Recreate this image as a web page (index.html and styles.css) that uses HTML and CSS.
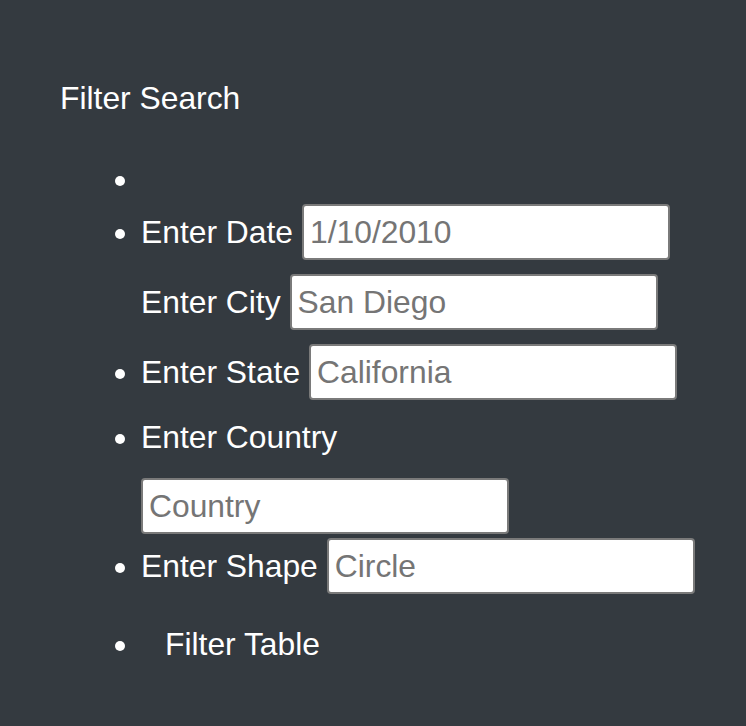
FILE: index.html
```html
<!DOCTYPE html>
<html lang="en">
<head>
<meta charset="utf-8">
<title>Filter Search</title>
<link rel="stylesheet" href="styles.css">
</head>
<body>
<main class="panel">
  <div class="title">Filter Search</div>
  <ul class="filters">
    <li class="empty"></li>
    <li>
      <div class="row"><label for="date">Enter Date</label><input id="date" type="text" placeholder="1/10/2010"></div>
    </li>
    <li class="nobullet">
      <div class="row"><label for="city">Enter City</label><input id="city" type="text" placeholder="San Diego"></div>
    </li>
    <li>
      <div class="row"><label for="state">Enter State</label><input id="state" type="text" placeholder="California"></div>
    </li>
    <li class="stacked">
      <div class="row col"><label for="country">Enter Country</label><input id="country" type="text" placeholder="Country"></div>
    </li>
    <li class="tight">
      <div class="row"><label for="shape">Enter Shape</label><input id="shape" type="text" placeholder="Circle"></div>
    </li>
    <li class="btnrow">
      <button type="button" class="filter-btn">Filter Table</button>
    </li>
  </ul>
</main>
</body>
</html>
```
FILE: styles.css
```css
html, body {
  margin: 0;
  background: #343a40;
}
body {
  color: #ffffff;
  font-family: "Liberation Sans", Arial, sans-serif;
  font-size: 31.8px;
  min-height: 726px;
}
.panel {
  padding: 81px 0 0 60px;
}
.title {
  line-height: 34px;
}
.filters {
  margin: 47px 0 0 0;
  padding: 0 0 0 81px;
  line-height: 34px;
}
.filters li {
  margin-bottom: 14px;
}
.filters li.empty {
  height: 34px;
  margin-bottom: 8px;
}
.filters li.nobullet {
  list-style: none;
}
.filters li.stacked {
  margin-top: 20px;
  margin-bottom: 4px;
}
.row {
  display: flex;
  align-items: center;
  gap: 9px;
}
.row.col {
  flex-direction: column;
  align-items: flex-start;
  gap: 24px;
}
.row label {
  white-space: nowrap;
}
.row input {
  box-sizing: border-box;
  width: 368px;
  height: 56px;
  padding: 0 6px;
  border: 2px solid #7a7a7a;
  border-radius: 4px;
  background: #ffffff;
  font: inherit;
  color: #222;
}
.row input::placeholder {
  color: #757575;
  opacity: 1;
}
.filters li.btnrow {
  margin-top: 22px;
}
.filter-btn {
  background: transparent;
  border: none;
  color: #ffffff;
  font: inherit;
  line-height: 34px;
  padding: 11px 24px;
  cursor: pointer;
}
```
